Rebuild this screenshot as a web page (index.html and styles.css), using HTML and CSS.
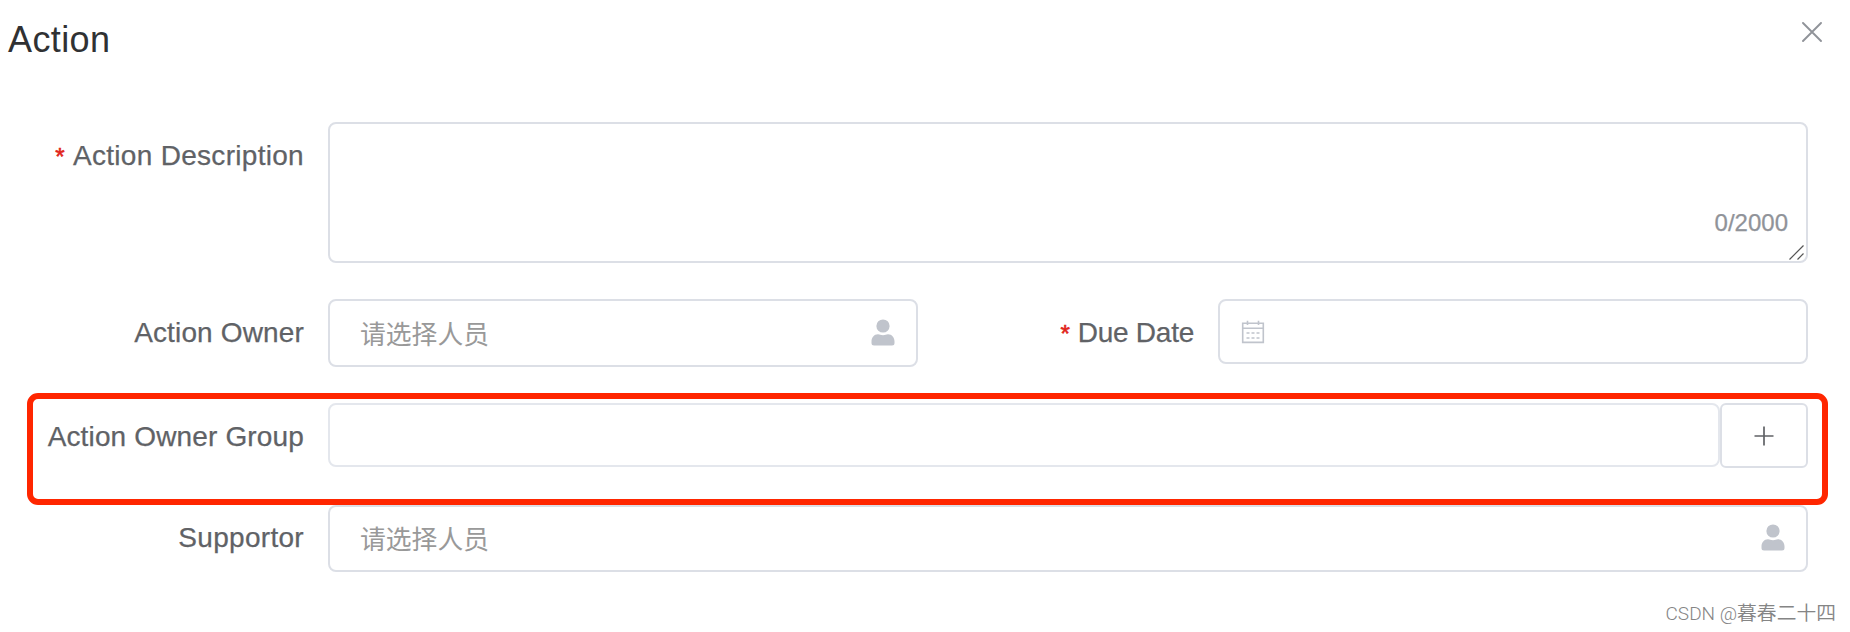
FILE: index.html
```html
<!DOCTYPE html>
<html lang="en">
<head>
<meta charset="utf-8">
<title>Action</title>
<link rel="stylesheet" href="styles.css">
</head>
<body>
<svg class="symbols" aria-hidden="true">
  <symbol id="user" viewBox="0 0 24 28">
    <circle cx="12" cy="7" r="6.6"/>
    <path d="M7 15.2C9 15.2 9.600 16.200 12 16.200S15 15.200 17 15.200C21 15.200 23.500 18.500 23.500 22.500V24Q23.500 26.500 21 26.500H3Q.5 26.500 .5 24V22.500C.5 18.500 3 15.200 7 15.200Z"/>
  </symbol>
</svg>
<main class="dialog">
  <header class="dialog-header">
    <h1 class="title">Action</h1>
    <svg class="close" viewBox="0 0 20 20"><path d="M1 1L19 19M19 1L1 19"/></svg>
  </header>
  <form class="form">
    <div class="row row-description">
      <label class="label label-wide required">Action Description</label>
      <div class="field textarea">
        <span class="counter">0/2000</span>
        <svg class="resize" viewBox="0 0 15 15"><path d="M.5 14.500L14.500 .5M8.500 14.500L14.500 8.500"/></svg>
      </div>
    </div>
    <div class="row row-owner">
      <label class="label">Action Owner</label>
      <div class="field picker"><span class="placeholder">请选择人员</span><svg class="user"><use href="#user"/></svg></div>
      <label class="label label-tight required">Due Date</label>
      <div class="field date">
        <svg class="calendar" viewBox="0 0 24 24"><path d="M1.700 3.200H22.300V22.400H1.700ZM1.700 8.200H22.300M6.500 .8V5M17.500 .8V5M5.500 13H8.500M10.500 13H13.500M15.500 13H18.500M5.500 18H8.500M10.500 18H13.500M15.500 18H18.500"/></svg>
      </div>
    </div>
    <div class="row row-group">
      <label class="label">Action Owner Group</label>
      <div class="field group"></div>
      <button class="add" type="button" aria-label="Add"><svg class="plus" viewBox="0 0 20 20"><path d="M10 .5V19.500M.5 10H19.500"/></svg></button>
      <div class="highlight"></div>
    </div>
    <div class="row row-support">
      <label class="label label-wide">Supportor</label>
      <div class="field picker"><span class="placeholder">请选择人员</span><svg class="user"><use href="#user"/></svg></div>
    </div>
  </form>
  <footer class="watermark"><span class="mark-latin">CSDN @</span>暮春二十四</footer>
</main>
</body>
</html>
```
FILE: styles.css
```css
* { box-sizing: border-box; }
body { margin: 0; background: #fff; font-family: "Liberation Sans", "Noto Sans CJK SC", sans-serif; }
.symbols { position: absolute; width: 0; height: 0; }
.dialog { width: 1850px; height: 632px; overflow: hidden; display: flex; flex-direction: column; }
.dialog-header { height: 122px; flex: none; display: flex; justify-content: space-between; align-items: flex-start; padding: 22px 28px 0 8px; }
.title { margin: 0; font-size: 36px; line-height: 36px; font-weight: 400; color: #303133; letter-spacing: .4px; }
.close { width: 20px; height: 20px; fill: none; stroke: #909399; stroke-width: 1.9; stroke-linecap: round; }
.form { display: flex; flex-direction: column; padding-right: 42px; }
.row { display: grid; grid-template-columns: 328px 1fr; align-items: start; position: relative; }
.row-description { height: 177px; }
.row-owner { grid-template-columns: 328px 590px 300px 590px; height: 104px; }
.row-group { grid-template-columns: 328px 1392px 88px; height: 102px; }
.label { padding-right: 24px; text-align: right; font-size: 28px; line-height: 67px; color: #606266; letter-spacing: .15px; white-space: nowrap; -webkit-text-stroke: .25px; }
.row-description .label, .row-owner .label { line-height: 68px; }
.row-support .label { line-height: 65px; }
.label-wide { letter-spacing: .3px; }
.label-tight { letter-spacing: -.25px; }
.required::before { content: "*"; color: #e1251b; font-size: 24px; margin-right: 8px; -webkit-text-stroke: .6px; }
.field { border: 2px solid #dcdfe6; border-radius: 8px; background: #fff; display: flex; align-items: center; }
.textarea { height: 141px; justify-content: flex-end; align-items: flex-end; position: relative; padding: 0 18px 21px 0; }
.counter { font-size: 24px; line-height: 34px; color: #909399; -webkit-text-stroke: .25px; }
.resize { position: absolute; right: 2px; bottom: 1px; width: 15px; height: 15px; fill: none; stroke: #555; stroke-width: 1.2; }
.picker { height: 68px; justify-content: space-between; padding: 0 21px 0 30px; }
.row-support .picker { height: 67px; padding-bottom: 2px; }
.placeholder { font-family: "Noto Sans CJK SC", sans-serif; font-size: 25.8px; line-height: 38px; color: #999; }
.user { width: 24px; height: 28px; fill: #c0c4cc; }
.date { height: 65px; padding-left: 21px; }
.calendar { width: 24px; height: 24px; fill: none; stroke: #c0c4cc; stroke-width: 1.6; }
.group { height: 64px; border-color: #e4e7ed; }
.add { width: 88px; height: 65px; padding: 0; border: 2px solid #dcdfe6; border-radius: 6px; background: #fff; display: flex; align-items: center; justify-content: center; }
.plus { width: 20px; height: 20px; fill: none; stroke: #606266; stroke-width: 1.7; }
.highlight { position: absolute; left: 26.5px; top: -10px; width: 1801px; height: 112px; border: 6px solid #ff2600; border-radius: 11px; z-index: 1; }
.watermark { margin-top: 26px; padding-right: 14px; text-align: right; font-family: "Noto Sans CJK SC", sans-serif; font-weight: 350; font-size: 19.8px; line-height: 28px; color: #858585; }
.mark-latin { font-family: Roboto, sans-serif; font-weight: 300; font-size: 19px; }
```
